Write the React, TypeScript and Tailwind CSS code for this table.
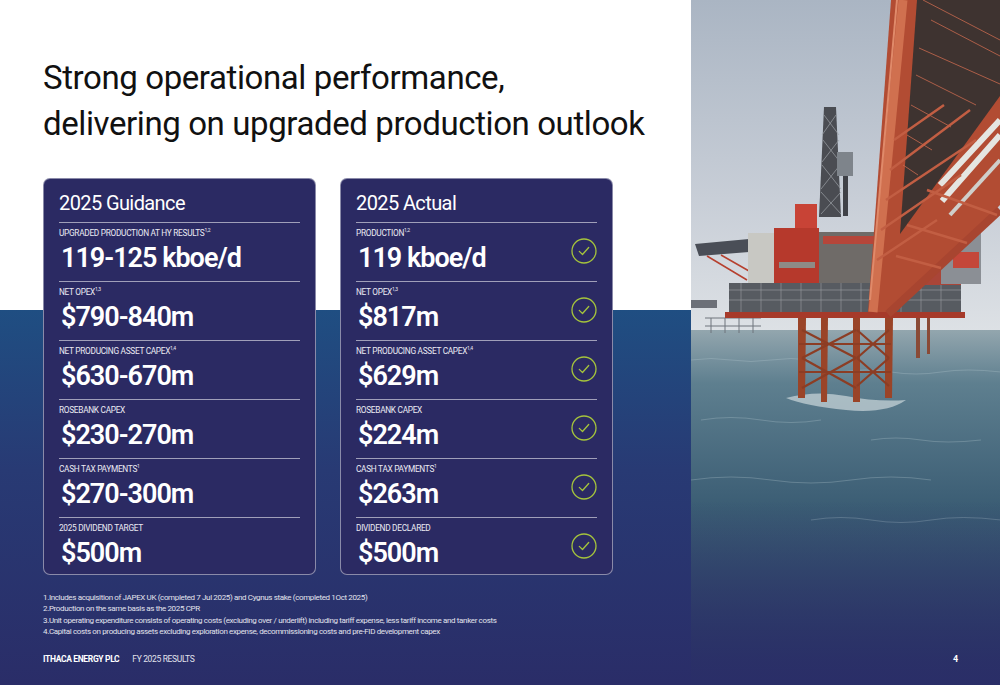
import React from 'react';

type Row = { label: string; sup?: string; value: string };

const guidance: Row[] = [
  { label: 'UPGRADED PRODUCTION AT HY RESULTS', sup: '1,2', value: '119-125 kboe/d' },
  { label: 'NET OPEX', sup: '1,3', value: '$790-840m' },
  { label: 'NET PRODUCING ASSET CAPEX', sup: '1,4', value: '$630-670m' },
  { label: 'ROSEBANK CAPEX', value: '$230-270m' },
  { label: 'CASH TAX PAYMENTS', sup: '1', value: '$270-300m' },
  { label: '2025 DIVIDEND TARGET', value: '$500m' },
];

const actual: Row[] = [
  { label: 'PRODUCTION', sup: '1,2', value: '119 kboe/d' },
  { label: 'NET OPEX', sup: '1,3', value: '$817m' },
  { label: 'NET PRODUCING ASSET CAPEX', sup: '1,4', value: '$629m' },
  { label: 'ROSEBANK CAPEX', value: '$224m' },
  { label: 'CASH TAX PAYMENTS', sup: '1', value: '$263m' },
  { label: 'DIVIDEND DECLARED', value: '$500m' },
];

const footnotes = [
  '1.Includes acquisition of JAPEX UK (completed 7 Jul 2025) and Cygnus stake (completed 1Oct 2025)',
  '2.Production on the same basis as the 2025 CPR',
  '3.Unit operating expenditure consists of operating costs (excluding over / underlift) including tariff expense, less tariff income and tanker costs',
  '4.Capital costs on producing assets excluding exploration expense, decommissioning costs and pre-FID development capex',
];

const CheckCircle = () => (
  <svg width="26" height="26" viewBox="0 0 26 26" fill="none">
    <circle cx="13" cy="13" r="12" stroke="#a5c43c" strokeWidth="1.3" />
    <path d="M8.3 13.4l3.2 3.1 6.2-7" stroke="#a5c43c" strokeWidth="1.3" strokeLinecap="round" strokeLinejoin="round" />
  </svg>
);

const Card = ({ title, rows, checks }: { title: string; rows: Row[]; checks?: boolean }) => (
  <div className="w-[273px] h-[397px] rounded-[7px] border border-white/45 bg-[#2b2a63] px-[15px] text-white">
    <div className="h-[43px] pt-[12px] text-[20px] leading-[24px] tracking-[-0.6px]">{title}</div>
    {rows.map((r) => (
      <div key={r.label} className="h-[59px] border-t border-white/55 pt-[5px] flex items-center">
        <div className="flex-1 self-start">
          <div className="text-[8.3px] leading-[11px] tracking-[-0.3px] text-[#ebebf3]">
            {r.label}
            {r.sup && <span className="text-[5px] align-top leading-none">{r.sup}</span>}
          </div>
          <div className="text-[27px] leading-[36px] font-semibold tracking-[-1px] mt-[1px] pl-[2px]">{r.value}</div>
        </div>
        {checks && (
          <div className="-mt-[8px]">
            <CheckCircle />
          </div>
        )}
      </div>
    ))}
  </div>
);

const Photo = () => (
  <svg width="309" height="685" viewBox="0 0 309 685" preserveAspectRatio="none" className="block">
    <defs>
      <linearGradient id="sky" x1="0" y1="0" x2="0" y2="1">
        <stop offset="0" stopColor="#aab5c3" />
        <stop offset="0.6" stopColor="#c8ced7" />
        <stop offset="1" stopColor="#dde1e5" />
      </linearGradient>
      <linearGradient id="sea" x1="0" y1="0" x2="0" y2="1">
        <stop offset="0" stopColor="#93a6ae" />
        <stop offset="0.15" stopColor="#5e7f8f" />
        <stop offset="0.5" stopColor="#3b5d74" />
        <stop offset="1" stopColor="#2a3a62" />
      </linearGradient>
      <linearGradient id="fade" x1="0" y1="0" x2="0" y2="1">
        <stop offset="0" stopColor="#2a2d68" stopOpacity="0" />
        <stop offset="1" stopColor="#2a2d68" stopOpacity="0.95" />
      </linearGradient>
    </defs>
    <rect x="0" y="0" width="309" height="332" fill="url(#sky)" />
    <rect x="0" y="330" width="309" height="355" fill="url(#sea)" />
    {/* waves */}
    <g stroke="#b7c9d0" strokeOpacity="0.3" strokeWidth="1" fill="none">
      <path d="M0 360q20-3 40 0t40 0 40 0" />
      <path d="M150 372q25-4 50 0t50 0 60 0" />
      <path d="M10 420q30-5 60 0t60 0" />
      <path d="M180 440q25-4 50 0t60 0" />
      <path d="M0 480q40-6 80 0t80 0 80 0" />
      <path d="M120 520q30-5 60 0t60 0 70 0" />
    </g>
    <path d="M95 398q30-8 60-2t60 4q-20 14-60 10t-60-12z" fill="#dfe8ea" opacity="0.6" />
    {/* distant platform */}
    <g stroke="#6f757c" strokeWidth="1">
      <path d="M14 318h56M14 326h56M20 318v15M34 318v15M48 318v15M62 318v15" />
    </g>
    {/* helideck + boom */}
    <path d="M0 300h26v8H0z" fill="#6c7078" />
    <path d="M4 244l54-5v13l-50 4z" fill="#4a4e57" />
    <path d="M16 256l40 24M30 255l28 16" stroke="#b6402f" strokeWidth="1.5" />
    {/* main deck */}
    <rect x="38" y="283" width="232" height="32" fill="#575b61" />
    <path d="M38 290h232M38 300h232" stroke="#8d9196" strokeWidth="0.8" />
    <path d="M50 283v32M70 283v32M90 283v32M110 283v32M130 283v32M150 283v32M170 283v32M190 283v32M210 283v32M230 283v32M250 283v32" stroke="#9a9ea3" strokeWidth="0.6" />
    <rect x="34" y="312" width="240" height="6" fill="#a63a2a" />
    <rect x="57" y="233" width="26" height="50" fill="#c8c8c3" />
    <rect x="83" y="228" width="45" height="55" fill="#b6392c" />
    <rect x="88" y="262" width="36" height="6" fill="#8e8b86" />
    <rect x="104" y="204" width="22" height="24" fill="#c84336" />
    <rect x="128" y="232" width="62" height="51" fill="#6f6b68" />
    <rect x="132" y="236" width="52" height="8" fill="#b6463a" />
    <rect x="190" y="245" width="80" height="40" fill="#a94538" />
    <rect x="250" y="232" width="40" height="52" fill="#8b8f95" />
    <rect x="262" y="252" width="26" height="16" fill="#c4473a" />
    {/* derrick */}
    <path d="M133 107h12l5 110h-22z" fill="#4a4c52" />
    <path d="M133 115l15 20M145 115l-14 20M132 140l17 22M148 140l-17 22M131 165l19 24M149 165l-19 24M130 192l20 22M150 192l-20 22" stroke="#9ea2a8" strokeWidth="0.7" />
    <rect x="146" y="152" width="16" height="24" fill="#7e848b" />
    <rect x="152" y="176" width="5" height="40" fill="#3f4147" />
    {/* jacket legs */}
    <g fill="#9a4428">
      <path d="M107 318h8l-1 80h-7z" />
      <path d="M130 318h7l-1 84h-6z" />
      <path d="M162 318h7v84h-7z" />
      <path d="M194 318h8l-1 80h-7z" />
    </g>
    <g stroke="#8c3d24" strokeWidth="2.2" fill="none">
      <path d="M111 330l54 28M165 330l-54 28M111 358l54 30M165 358l-54 30M166 330l32 28M198 330l-32 28M166 358l32 28M198 358l-32 28" />
      <path d="M108 344h92M108 372h92" />
    </g>
    <path d="M225 318h4v40h-4zM236 318h3v36h-3z" fill="#8a4a36" />
    {/* bridge */}
    <path d="M200 0h109v205l-104 107h-28z" fill="#b24c33" />
    <path d="M226 0h83v96l-100 138z" fill="#3e3330" />
    <g stroke="#c86a4f" strokeWidth="1" opacity="0.8">
      <path d="M232 0l77 40M240 20l69 36M228 48l81 36M225 75l60 30M220 105l40 22M216 135l25 15M212 165l15 10" />
    </g>
    <path d="M309 120l-60 65M309 135l-58 66" stroke="#e5e5e1" strokeWidth="6" />
    <path d="M309 160l-50 55" stroke="#cfcfcb" strokeWidth="4" />
    <path d="M212 0l-30 312" stroke="#d0704f" strokeWidth="9" />
    <path d="M206 0l-27 300" stroke="#e08a6a" strokeWidth="2" />
    <path d="M309 210l-112 104" stroke="#a84530" strokeWidth="8" />
    <g stroke="#c25e43" strokeWidth="2.5">
      <path d="M186 260l60-40M190 230l80-55M195 200l90-60M199 170l80-60M203 140l50-35M306 215l-70-25M276 243l-60-18M250 268l-45-12" />
    </g>
    <rect x="0" y="500" width="309" height="185" fill="url(#fade)" />
  </svg>
);

export default function App() {
  return (
    <div className="w-[1000px] h-[685px] flex overflow-hidden bg-white" style={{ fontFamily: 'Roboto, "Liberation Sans", sans-serif' }}>
      <div className="w-[691px] h-full flex flex-col pl-[43px] bg-[linear-gradient(to_bottom,#ffffff_0,#ffffff_310px,#1f4e82_310px,#283a74_470px,#2a2d68_100%)]">
        <h1 className="mt-[55px] text-[33px] leading-[46px] text-[#111] tracking-[-0.4px] whitespace-nowrap">
          Strong operational performance,
          <br />
          delivering on upgraded production outlook
        </h1>
        <div className="mt-[31px] flex gap-[24px]">
          <Card title="2025 Guidance" rows={guidance} />
          <Card title="2025 Actual" rows={actual} checks />
        </div>
        <div className="mt-[17px] text-[8px] leading-[11.3px] tracking-[-0.36px] text-[#e2e3ec]">
          {footnotes.map((f) => (
            <div key={f}>{f}</div>
          ))}
        </div>
        <div className="mt-auto pb-[20px] flex gap-[13px] text-[8.5px] leading-[12px] tracking-[-0.35px] text-white">
          <span className="font-bold">ITHACA ENERGY PLC</span>
          <span className="text-[#e2e3ec]">FY 2025 RESULTS</span>
        </div>
      </div>
      <div className="relative w-[309px] h-full">
        <Photo />
        <span className="absolute left-[262px] top-[653px] text-[9px] font-bold text-white">4</span>
      </div>
    </div>
  );
}
